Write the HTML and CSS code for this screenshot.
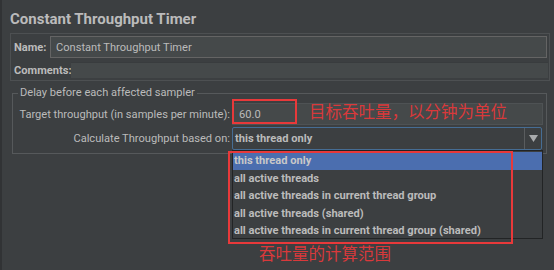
FILE: index.html
```html
<!DOCTYPE html>
<html>
<head>
<meta charset="utf-8">
<link rel="stylesheet" href="styles.css">
</head>
<body>
<div class="app">
  <h1 class="title">Constant Throughput Timer</h1>
  <div class="name-panel">
    <div class="row name-row">
      <span class="lbl">Name:</span>
      <div class="field">Constant Throughput Timer</div>
    </div>
    <div class="row comments-row">
      <span class="lbl">Comments:</span>
      <div class="field comments"></div>
    </div>
  </div>
  <fieldset class="group">
    <legend>Delay before each affected sampler</legend>
    <div class="form">
      <span class="flabel">Target throughput (in samples per minute):</span>
      <div class="field tfield">60.0</div>
      <span class="flabel">Calculate Throughput based on:</span>
      <div class="combo">
        <span class="combo-text">this thread only</span>
        <span class="combo-btn"><svg width="9" height="7" viewBox="0 0 9 7"><path d="M0 0H9L4.5 7Z" fill="#a9abad"/></svg></span>
      </div>
    </div>
  </fieldset>

  <ul class="popup">
    <li class="sel">this thread only</li>
    <li>all active threads</li>
    <li>all active threads in current thread group</li>
    <li>all active threads (shared)</li>
    <li>all active threads in current thread group (shared)</li>
  </ul>
  <div class="mark mark1"></div>
  <div class="mark mark2"></div>
  <div class="note note1">目标吞吐量，以分钟为单位</div>
  <div class="note note2">吞吐量的计算范围</div>
</div>
</body>
</html>
```
FILE: styles.css
```css
html, body {
  margin: 0;
  padding: 0;
  background: #3c3f41;
}
body {
  width: 554px;
  height: 270px;
  overflow: hidden;
  font-family: Roboto, "Liberation Sans", Arial, sans-serif;
  font-size: 11.1px;
  color: #bbbbbb;
}
.app {
  position: relative;
  height: 270px;
  border-left: 2px solid #313335;
  box-sizing: border-box;
}
.title {
  margin: 0;
  padding: 9px 0 0 8px;
  height: 24px;
  font-size: 15px;
  font-weight: bold;
  line-height: 20px;
  color: #bbbbbb;
}
.name-panel {
  margin: 0 4px 0 8px;
  border: 1px solid #4d5052;
  padding: 2px;
}
.row {
  display: flex;
  align-items: center;
}
.lbl {
  font-size: 11.1px;
  font-weight: bold;
  padding-left: 1px;
}
.name-row {
  height: 22px;
}
.name-row .lbl {
  width: 36px;
}
.field {
  background: #45494a;
  border: 1px solid #646464;
  box-sizing: border-box;
  font-size: 11.1px;
  color: #bbbbbb;
  padding-left: 5px;
  display: flex;
  align-items: center;
}
.name-row .field {
  flex: 1;
  height: 22px;
}
.comments-row {
  margin-top: 4px;
  height: 16px;
}
.comments-row .lbl {
  width: 57px;
}
.field.comments {
  flex: 1;
  height: 16px;
  border: none;
  border-top: 1px solid #393c3e;
  margin-right: -1px;
}
.group {
  margin: 5px 7px 0 10px;
  padding: 3px 2px 3px 3px;
  border: 1px solid #56595b;
  min-width: 0;
}
.group legend {
  font-size: 11.1px;
  padding: 0 2px;
  margin-left: 2px;
  line-height: 14px;
}
.form {
  display: grid;
  grid-template-columns: 216px 1fr;
  row-gap: 2px;
  align-items: center;
}
.flabel {
  font-size: 11.1px;
  text-align: right;
  padding-right: 2px;
  white-space: nowrap;
}
.tfield {
  height: 22px;
  margin-right: 1px;
  padding-left: 6px;
  border-color: #4e5254;
}
.combo {
  height: 23px;
  border: 1px solid #466d94;
  border-radius: 2px;
  box-sizing: border-box;
  margin-right: 2px;
  display: flex;
  background: #3c3f41;
}
.combo-text {
  flex: 1;
  font-size: 11.1px;
  font-weight: bold;
  padding-left: 2px;
  display: flex;
  align-items: center;
}
.combo-btn {
  width: 16px;
  border-left: 1px solid #5a5d5f;
  display: flex;
  align-items: center;
  justify-content: center;
}
.popup {
  position: absolute;
  left: 230px;
  top: 150px;
  width: 311px;
  height: 89px;
  margin: 0;
  padding: 1px 0 0 0;
  list-style: none;
  box-sizing: border-box;
  background: #3c3f41;
  border: 1px solid #222425;
}
.popup li {
  height: 17.5px;
  line-height: 17.5px;
  font-size: 11.1px;
  font-weight: bold;
  padding-left: 1px;
  white-space: nowrap;
}
.popup li.sel {
  background: #4b6eaf;
  color: #c8c8c8;
}
.mark {
  position: absolute;
  border: 2px solid #e8393a;
  box-sizing: border-box;
}
.mark1 {
  left: 230px;
  top: 99px;
  width: 65px;
  height: 25px;
}
.mark2 {
  left: 226px;
  top: 151px;
  width: 285px;
  height: 93px;
}
.note {
  position: absolute;
  font-family: "Noto Sans CJK SC", sans-serif;
  color: #d9393b;
  white-space: nowrap;
}
.note1 {
  left: 307px;
  top: 100px;
  font-size: 16.5px;
  line-height: 22px;
}
.note2 {
  left: 257px;
  top: 242px;
  font-size: 16.5px;
  line-height: 22px;
}
```
